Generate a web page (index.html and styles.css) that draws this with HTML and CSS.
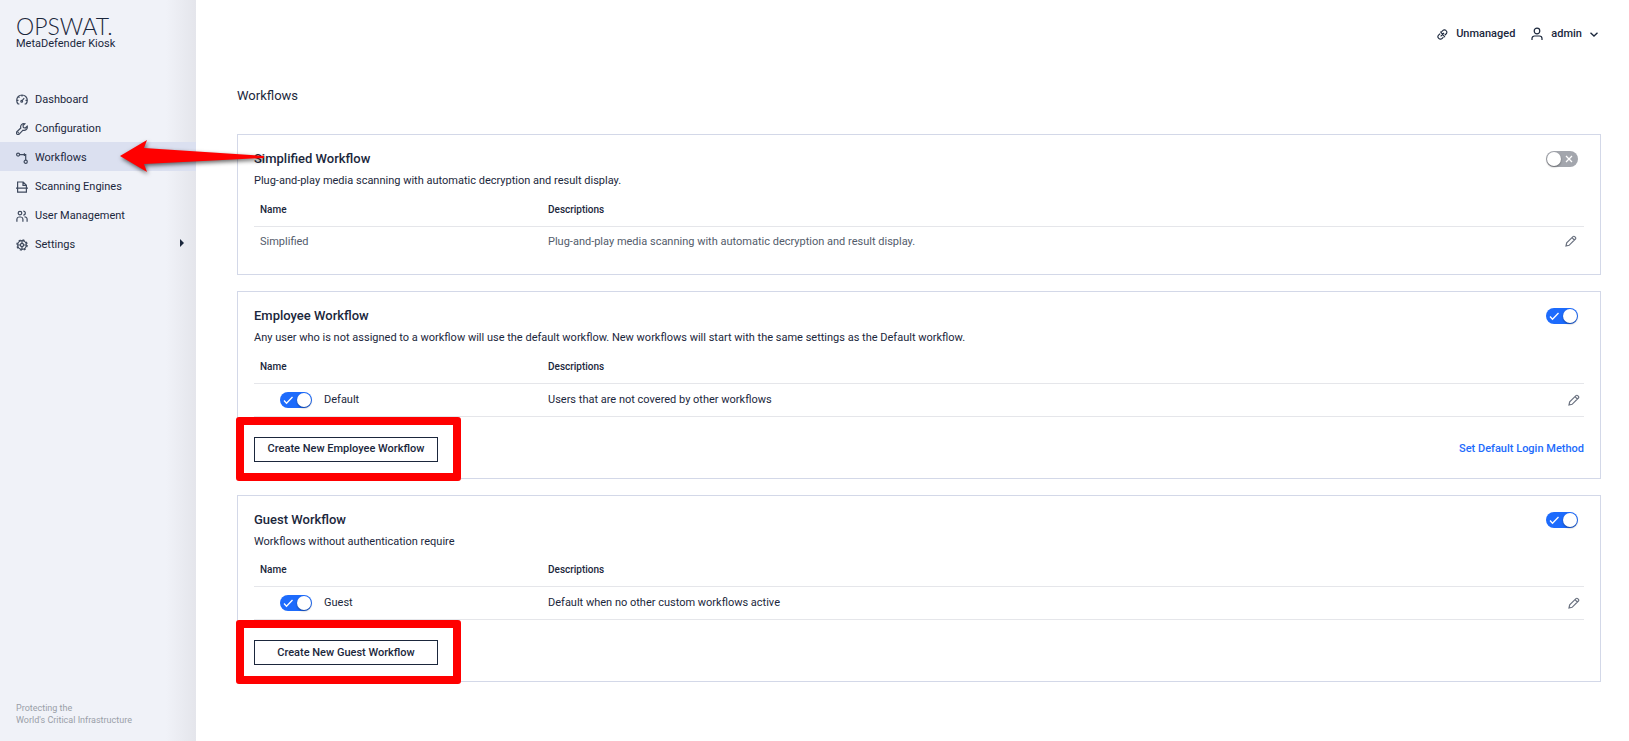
FILE: index.html
```html
<!DOCTYPE html>
<html lang="en">
<head>
	<meta charset="utf-8">
	<meta name="viewport" content="width=device-width, initial-scale=1">
	<title>Workflows</title>
	<link rel="stylesheet" href="styles.css">
</head>

<body>
	<!-- shared icons -->
	<svg class="sprite" aria-hidden="true">
		<symbol id="icon-pencil" viewBox="0 0 12 12">
			<path d="M1 11l.7-3.1L8 1.6a1.2 1.2 0 0 1 1.7 0l.7.7a1.2 1.2 0 0 1 0 1.7L4.1 10.3zM7 2.7L9.3 5"/>
		</symbol>
		<symbol id="icon-check" viewBox="0 0 10 10">
			<path d="M1 5.5l2.5 2.700L9.500 2"/>
		</symbol>
		<symbol id="icon-cross" viewBox="0 0 10 10">
			<path d="M2 2l6 6M8 2L2 8"/>
		</symbol>
	</svg>

	<div class="layout">
		<aside class="sidebar">
			<div class="logo">
				<div class="logo-brand">OPSWAT.</div>
				<div class="logo-product">MetaDefender Kiosk</div>
			</div>
			<nav class="menu">
				<a class="menu-item" href="#">
					<svg class="icon" viewBox="0 0 12 12"><path d="M3.400 10H2.200A5.300 5.300 0 1 1 9.800 10H8.600M6.100 6.700L8.200 4.200M1 6.300h1.500M9.500 6.300H11M6 1.300v1.300M2.600 2.800l.9.9"/><circle cx="5.700" cy="7.200" r=".9"/></svg>
					Dashboard
				</a>
				<a class="menu-item" href="#">
					<svg class="icon" viewBox="0 0 12 12"><path d="M11.2 3.2L9.3 5 7.4 4.6 7 2.7 8.9.8A3.3 3.3 0 0 0 4.8 5L.9 8.8a1.4 1.4 0 0 0 2.3 2.3L7 7.2a3.3 3.3 0 0 0 4.2-4z"/><circle cx="2.3" cy="9.7" r=".3"/></svg>
					Configuration
				</a>
				<a class="menu-item active" href="#">
					<svg class="icon" viewBox="0 0 12 12"><circle cx="2.1" cy="2.6" r="1.5"/><circle cx="9.7" cy="9.8" r="1.6"/><path d="M3.6 2.6h6.1v5.6M7.9 2.6h1.8M8.4 1.3v2.6"/></svg>
					Workflows
				</a>
				<a class="menu-item" href="#">
					<svg class="icon" viewBox="0 0 12 12"><path d="M1.6 7V1h5.6l3.2 3.2V7M7 1v3.4h3.4M0 7.2h12M1.6 7.2v4h8.8v-4"/></svg>
					Scanning Engines
				</a>
				<a class="menu-item" href="#">
					<svg class="icon" viewBox="0 0 12 12"><circle cx="4" cy="3.1" r="1.8"/><path d="M7.3 1.1a2 2 0 1 1 0 4M.9 11.7V9a2.2 2.2 0 0 1 2.2-2h1.6a2.2 2.2 0 0 1 2.2 2v2.7M8.5 6.8a2.4 2.4 0 0 1 2.6 2.3v2.6"/></svg>
					User Management
				</a>
				<a class="menu-item" href="#">
					<svg class="icon" viewBox="0 0 12 12"><circle cx="6" cy="6" r="4.3"/><circle cx="6" cy="6" r="1.6"/><circle cx="6" cy="6" r="5.1" stroke-width="1.4" stroke-dasharray="2 2"/><path d="M6 1.7v2.7M6 7.6v2.7M1.7 6h2.7M7.6 6h2.7"/></svg>
					Settings
					<svg class="caret" viewBox="0 0 4 8"><path d="M0 0l4 4-4 4z"/></svg>
				</a>
			</nav>
			<p class="tagline">Protecting the<br>World's Critical Infrastructure</p>
		</aside>

		<main class="content">
			<header class="topbar">
				<div class="topbar-item">
					<svg class="icon-link" viewBox="0 0 12 12"><path d="M4.9 3.2l1.6-1.6a2.2 2.2 0 0 1 3.2 0l.4.4a2.2 2.2 0 0 1 0 3.2L8.4 6.8M7 8.8l-1.6 1.6a2.2 2.2 0 0 1-3.2 0l-.5-.5a2.2 2.2 0 0 1 0-3.1L3.5 5M3.7 2.9l5 6.1M7.7 4.2L4 8"/></svg>
					Unmanaged
				</div>
				<button class="topbar-item user" type="button">
					<svg class="icon-user" viewBox="0 0 12 14"><circle cx="6" cy="4" r="2.8"/><path d="M1 13v-1.5A2.5 2.5 0 0 1 3.5 9h5A2.5 2.5 0 0 1 11 11.5V13"/></svg>
					admin
					<svg class="chevron" viewBox="0 0 8 5"><path d="M.5.7L4 4 7.5.7"/></svg>
				</button>
			</header>

			<h1>Workflows</h1>

			<section class="card simplified">
				<div class="card-header">
					<h2>Simplified Workflow</h2>
					<label class="switch">
						<input type="checkbox" aria-label="Simplified Workflow">
						<svg><use href="#icon-cross"/></svg>
					</label>
				</div>
				<p>Plug-and-play media scanning with automatic decryption and result display.</p>
				<table>
					<thead>
						<tr><th class="col-name">Name</th><th>Descriptions</th><th class="col-edit"></th></tr>
					</thead>
					<tbody>
						<tr>
							<td>Simplified</td>
							<td>Plug-and-play media scanning with automatic decryption and result display.</td>
							<td class="col-edit"><button class="edit" type="button" aria-label="Edit Simplified"><svg><use href="#icon-pencil"/></svg></button></td>
						</tr>
					</tbody>
				</table>
			</section>

			<section class="card">
				<div class="card-header">
					<h2>Employee Workflow</h2>
					<label class="switch">
						<input type="checkbox" aria-label="Employee Workflow" checked>
						<svg><use href="#icon-check"/></svg>
					</label>
				</div>
				<p>Any user who is not assigned to a workflow will use the default workflow. New workflows will start with the same settings as the Default workflow.</p>
				<table>
					<thead>
						<tr><th class="col-name">Name</th><th>Descriptions</th><th class="col-edit"></th></tr>
					</thead>
					<tbody>
						<tr>
							<td>
								<div class="name-cell">
									<label class="switch">
										<input id="default" type="checkbox" checked>
										<svg><use href="#icon-check"/></svg>
									</label>
									<label for="default">Default</label>
								</div>
							</td>
							<td>Users that are not covered by other workflows</td>
							<td class="col-edit"><button class="edit" type="button" aria-label="Edit Default"><svg><use href="#icon-pencil"/></svg></button></td>
						</tr>
					</tbody>
				</table>
				<div class="card-footer">
					<div class="highlight">
						<button class="create" type="button">Create New Employee Workflow</button>
					</div>
					<a class="login-link" href="#">Set Default Login Method</a>
				</div>
			</section>

			<section class="card">
				<div class="card-header">
					<h2>Guest Workflow</h2>
					<label class="switch">
						<input type="checkbox" aria-label="Guest Workflow" checked>
						<svg><use href="#icon-check"/></svg>
					</label>
				</div>
				<p>Workflows without authentication require</p>
				<table>
					<thead>
						<tr><th class="col-name">Name</th><th>Descriptions</th><th class="col-edit"></th></tr>
					</thead>
					<tbody>
						<tr>
							<td>
								<div class="name-cell">
									<label class="switch">
										<input id="guest" type="checkbox" checked>
										<svg><use href="#icon-check"/></svg>
									</label>
									<label for="guest">Guest</label>
								</div>
							</td>
							<td>Default when no other custom workflows active</td>
							<td class="col-edit"><button class="edit" type="button" aria-label="Edit Guest"><svg><use href="#icon-pencil"/></svg></button></td>
						</tr>
					</tbody>
				</table>
				<div class="card-footer">
					<div class="highlight">
						<button class="create" type="button">Create New Guest Workflow</button>
					</div>
				</div>
			</section>
		</main>
	</div>

	<!-- arrow pointing at the active menu item -->
	<svg class="arrow" viewBox="0 0 150 40"><path d="M3 20L30 4 27 12 147 20v2L27 28l3 8z"/></svg>
</body>
</html>
```
FILE: styles.css
```css
*, *::before, *::after {
	box-sizing: border-box;
}

body {
	margin: 0;
	font-family: Roboto, sans-serif;
	font-size: 11px;
	line-height: 16px;
	color: #1b273c;
	background: #fff;
}

h1, h2, p {
	margin: 0;
}

a {
	color: inherit;
	text-decoration: none;
}

button {
	font: inherit;
	color: inherit;
	background: none;
	border: none;
	padding: 0;
	cursor: pointer;
}

svg {
	fill: none;
	stroke: currentColor;
	flex-shrink: 0;
}

.sprite {
	display: none;
}

.layout {
	display: flex;
	min-height: 100vh;
}

/* sidebar */
.sidebar {
	width: 196px;
	flex-shrink: 0;
	display: flex;
	flex-direction: column;
	background: linear-gradient(to left, #e4e5eb, #f0f2f8 30px);
}

.logo {
	height: 84px;
	padding: 17px 16px 0;
}

.logo-brand {
	font-family: Lato, sans-serif;
	font-size: 23px;
	font-weight: 300;
	line-height: 19px;
}

.logo-product {
	line-height: 16px;
}

.menu-item {
	display: flex;
	align-items: center;
	height: 29px;
	padding: 2px 12px 0 16px;
	gap: 7px;
}

.menu-item.active {
	background: #dbe0f0;
}

.icon {
	width: 12px;
	height: 12px;
	color: #3f4a5e;
	stroke-width: 1.2;
}

.caret {
	width: 4px;
	height: 8px;
	margin: 0 0 4px auto;
	fill: currentColor;
	stroke: none;
}

.tagline {
	margin-top: auto;
	padding: 0 16px 15px;
	font-size: 9px;
	line-height: 12px;
	color: #9a9fa8;
}

/* main area */
.content {
	flex: 1;
	min-width: 0;
	padding: 26px 28px 20px 41px;
}

.topbar {
	display: flex;
	justify-content: flex-end;
	gap: 16px;
	font-weight: 500;
}

.topbar-item {
	display: flex;
	align-items: center;
	gap: 8px;
}

.icon-link {
	width: 11px;
	height: 11px;
	stroke-width: 1.2;
}

.icon-user {
	width: 12px;
	height: 14px;
	stroke-width: 1.2;
}

.chevron {
	width: 8px;
	height: 5px;
	stroke-width: 1.3;
}

.user {
	padding-right: 3px;
}

h1 {
	margin: 44px 0 28px;
	font-size: 13px;
	line-height: 20px;
	font-weight: 400;
}

.card {
	margin-bottom: 16px;
	padding: 16px;
	border: 1px solid #d3d8e8;
}

.card-header {
	display: flex;
	justify-content: space-between;
	align-items: center;
	padding-right: 6px;
}

h2 {
	font-size: 13px;
	line-height: 16px;
	font-weight: 500;
}

.card p {
	margin: 6px 0 5px;
}

table {
	width: 100%;
	border-collapse: collapse;
	table-layout: fixed;
}

th {
	height: 32px;
	padding: 0 6px;
	font-size: 10px;
	font-weight: 500;
	text-align: left;
}

td {
	height: 33px;
	padding: 0 6px;
}

tr {
	border-bottom: 1px solid #e5e6ea;
}

.col-name {
	width: 288px;
}

.col-edit {
	width: 60px;
	padding-right: 4px;
	text-align: right;
}

.simplified tbody tr {
	border-bottom: none;
}

.simplified td {
	height: 32px;
	color: #535c6b;
}

.simplified td.col-edit {
	padding: 6px 7px 0 0;
	vertical-align: top;
}

.edit {
	display: inline-block;
	vertical-align: middle;
	width: 12px;
	height: 12px;
	color: #6b7280;
}

.edit svg {
	display: block;
	width: 12px;
	height: 12px;
	stroke-width: 1.2;
}

.name-cell {
	display: flex;
	align-items: center;
	gap: 12px;
	padding-left: 20px;
}

/* toggle switch */
.switch {
	display: grid;
	width: 32px;
	height: 16px;
	align-items: center;
}

.switch input {
	grid-area: 1 / 1;
	appearance: none;
	display: flex;
	width: 32px;
	height: 16px;
	margin: 0;
	padding: 1px;
	border-radius: 8px;
	background: #a3a6ad;
}

.switch input::before {
	content: "";
	width: 14px;
	height: 14px;
	border-radius: 50%;
	background: #fff;
	box-shadow: 0 1px 2px rgba(0, 0, 0, .4);
}

.switch input:checked {
	justify-content: flex-end;
	background: #1d6bfc;
}

.switch svg {
	grid-area: 1 / 1;
	justify-self: end;
	width: 10px;
	height: 10px;
	margin: 0 4px 0 3px;
	color: #fff;
	stroke-width: 1.3;
	pointer-events: none;
	z-index: 1;
}

.switch input:checked + svg {
	justify-self: start;
}

.card-footer {
	display: flex;
	justify-content: space-between;
	align-items: center;
	padding-top: 20px;
}

.create {
	display: block;
	width: 184px;
	height: 25px;
	border: 1px solid #1b273c;
	font-weight: 500;
}

.login-link {
	color: #1d6bfc;
	font-weight: 500;
}

/* red callouts drawn over the page */
.highlight {
	position: relative;
}

.highlight::after {
	content: "";
	position: absolute;
	top: -20px;
	left: -18px;
	width: 225px;
	height: 64px;
	border: 8px solid #f00;
	border-radius: 3px;
	pointer-events: none;
}

.arrow {
	position: absolute;
	top: 136px;
	left: 117px;
	width: 150px;
	height: 40px;
	fill: #f00;
	stroke: none;
	filter: drop-shadow(1px 2px 2px rgba(0, 0, 0, .6));
	pointer-events: none;
}
```
